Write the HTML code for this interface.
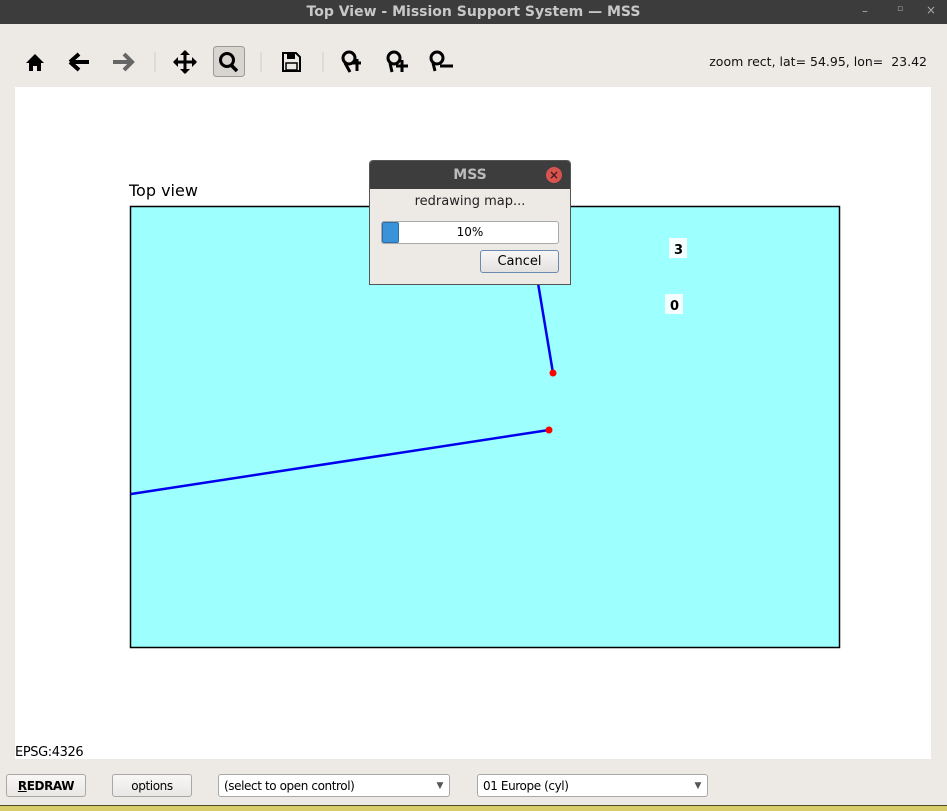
<!DOCTYPE html>
<html><head><meta charset="utf-8"><style>
*{margin:0;padding:0;box-sizing:border-box}
body{width:947px;height:811px;background:#edeae6;font-family:"DejaVu Sans","Liberation Sans",sans-serif;position:relative;overflow:hidden}
.abs{position:absolute}
.title{left:0;top:0;width:947px;height:24px;background:#3c3c3c;color:#c8c8c8;font-weight:bold;font-size:14px;text-align:center;line-height:24px}
.canvas{left:15px;top:87px;width:916px;height:672px;background:#fff}
.btn{border:1px solid #a8a8a8;border-radius:3px;background:linear-gradient(#f8f7f6,#e9e7e4);font-size:12px;letter-spacing:-0.4px;text-align:center;line-height:22px;height:23px;top:774px}
</style></head><body>
<div class="abs title">Top View - Mission Support System — MSS</div>
<div class="abs" style="left:862px;top:4px;color:#aaa;font-size:12px">–</div>
<div class="abs" style="left:897px;top:4px;color:#aaa;font-size:9px">▫</div>
<div class="abs" style="left:926px;top:3px;color:#aaa;font-size:12px">×</div>
<svg class="abs" style="left:0;top:40px" width="470" height="45">
<path d="M26 23 L35 14 L44 23 L41 23 L41 31 L37 31 L37 26 L33 26 L33 31 L29 31 L29 23Z" fill="#000"/>
<path d="M70 22 L79 14 M70 22 L79 30 M70 22 L89 22" stroke="#000" stroke-width="4" fill="none"/>
<path d="M113 22 L132 22 M124 14 L132 22 L124 30" stroke="#666" stroke-width="4" fill="none"/>
<line x1="155" y1="12" x2="155" y2="32" stroke="#ccc"/>
<path d="M185 11 L185 33 M174 22 L196 22" stroke="#000" stroke-width="3"/>
<path d="M185 10 L180 15 L190 15Z M185 34 L180 29 L190 29Z M173 22 L178 17 L178 27Z M197 22 L192 17 L192 27Z" fill="#000"/>
<rect x="213.5" y="6.5" width="31" height="30" rx="3" fill="#d8d5d1" stroke="#999"/>
<circle cx="227" cy="20" r="6.5" stroke="#000" stroke-width="3" fill="none"/>
<path d="M231 25 L237 31" stroke="#000" stroke-width="3.5"/>
<line x1="261" y1="12" x2="261" y2="32" stroke="#ccc"/>
<path d="M283 13 L296 13 L300 17 L300 31 L283 31Z" stroke="#000" stroke-width="2" fill="none"/>
<rect x="287" y="14" width="8" height="5" fill="#000"/><rect x="286" y="23" width="11" height="7" stroke="#000" stroke-width="1.5" fill="none"/>
<line x1="323" y1="12" x2="323" y2="32" stroke="#ccc"/>
<circle cx="349" cy="18" r="6" stroke="#000" stroke-width="3" fill="none"/><path d="M345 23 L350 32 M353 23 L361 23 M357 19 L357 31" stroke="#000" stroke-width="3"/>
<circle cx="394" cy="18" r="6" stroke="#000" stroke-width="3" fill="none"/><path d="M390 23 L392 32 M396 26 L408 26 M402 20 L402 32" stroke="#000" stroke-width="3"/>
<circle cx="437" cy="18" r="6" stroke="#000" stroke-width="3" fill="none"/><path d="M433 23 L435 31 M440 26 L453 26" stroke="#000" stroke-width="3"/>
</svg>
<div class="abs" style="right:20px;top:54px;font-size:12.5px;color:#111">zoom rect, lat= 54.95, lon=&nbsp; 23.42</div>
<div class="abs canvas"></div>
<div class="abs" style="left:129px;top:181px;font-size:16px">Top view</div>
<svg class="abs" style="left:0;top:0" width="947" height="811">
<rect x="130.5" y="206.5" width="709" height="441" fill="#9effff" stroke="#000" stroke-width="1.5"/>
<line x1="538" y1="283" x2="553" y2="373" stroke="#0000ee" stroke-width="2.5"/>
<line x1="131" y1="494" x2="549" y2="430" stroke="#0000ee" stroke-width="2.5"/>
<circle cx="553" cy="373" r="3.5" fill="#f00"/><circle cx="549" cy="430" r="3.5" fill="#f00"/>
<rect x="669" y="238" width="18" height="20" fill="#fff" opacity=".9"/>
<rect x="665" y="294" width="18" height="20" fill="#fff" opacity=".9"/>
<text x="674" y="254" font-family="DejaVu Sans" font-weight="bold" font-size="13">3</text>
<text x="670" y="310" font-family="DejaVu Sans" font-weight="bold" font-size="13">0</text>
</svg>
<div class="abs" style="left:369px;top:160px;width:202px;height:125px;background:#edeae6;border:1px solid #555;border-radius:4px 4px 0 0;overflow:hidden">
<div style="height:28px;background:#3d3d3d;color:#bbb;font-weight:bold;font-size:14px;text-align:center;line-height:28px">MSS</div>
<div class="abs" style="left:176px;top:6px;width:16px;height:16px;border-radius:50%;background:#d9534f;color:#4a1f1f;font-size:12px;line-height:16px;text-align:center;font-weight:bold">×</div>
<div style="text-align:center;font-size:13px;margin-top:5px;color:#222">redrawing map...</div>
<div class="abs" style="left:11px;top:60px;width:178px;height:23px;background:#fff;border:1px solid #aaa;border-radius:3px;font-size:12px;text-align:center;line-height:21px">10%
<div class="abs" style="left:0;top:0;width:17px;height:21px;background:#3a92d8;border:1px solid #2a6fa8;border-radius:2px"></div></div>
<div class="abs" style="left:110px;top:89px;width:79px;height:23px;border:1px solid #6a8bb0;border-radius:3px;background:linear-gradient(#f8f7f6,#e4e2df);font-size:13px;text-align:center;line-height:21px">Cancel</div>
</div>
<div class="abs" style="left:15px;top:745px;font-size:13px;letter-spacing:-0.4px">EPSG:4326</div>
<div class="abs btn" style="left:6px;width:80px;font-weight:bold"><u>R</u>EDRAW</div>
<div class="abs btn" style="left:112px;width:80px">options</div>
<div class="abs btn" style="left:218px;width:232px;text-align:left;padding-left:5px;background:#fff">(select to open control)<span style="position:absolute;right:6px;font-size:9px;color:#555">▼</span></div>
<div class="abs btn" style="left:477px;width:231px;text-align:left;padding-left:5px;background:#fff">01 Europe (cyl)<span style="position:absolute;right:6px;font-size:9px;color:#555">▼</span></div>
<div class="abs" style="left:0;top:805px;width:947px;height:6px;background:linear-gradient(#4a4a2a 0,#4a4a2a 1px,#d8cc6a 1px)"></div>
</body></html>
